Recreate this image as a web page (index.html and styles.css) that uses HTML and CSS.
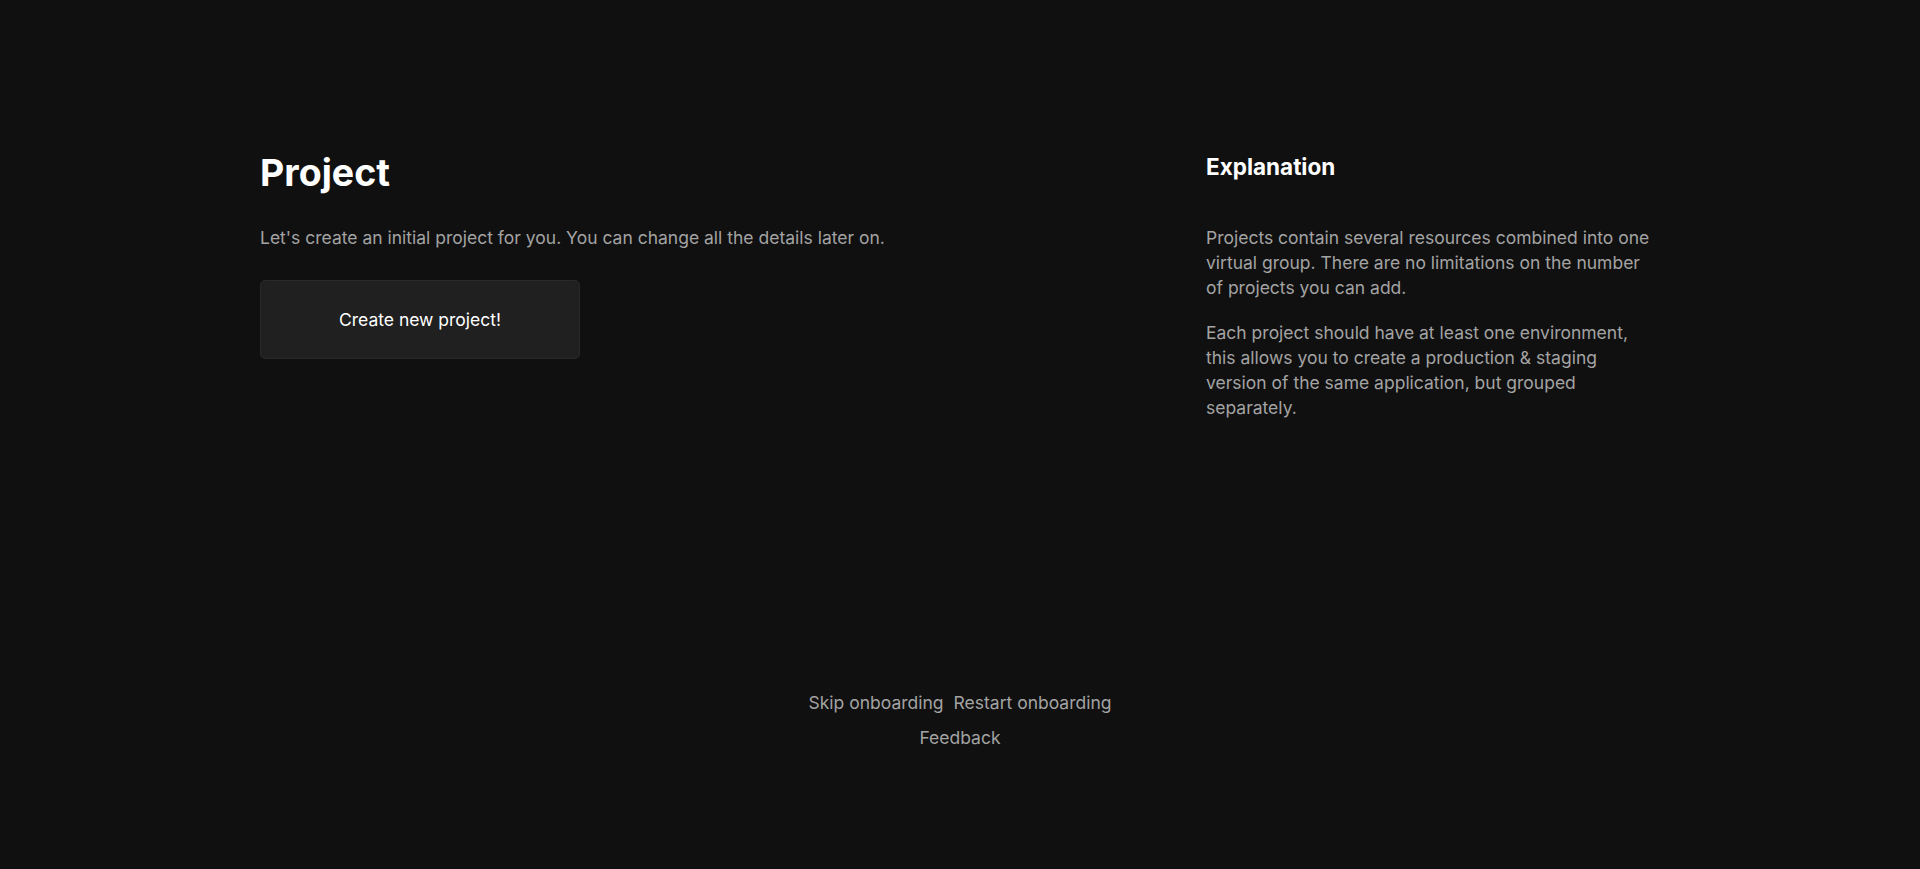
FILE: index.html
```html
<!DOCTYPE html>
<html lang="en">
<head>
<meta charset="utf-8">
<title>Onboarding - Project</title>
<link rel="stylesheet" href="styles.css">
</head>
<body>
<div class="page">
  <main class="step">
    <section class="step-main">
      <h1 class="step-title">Project</h1>
      <p class="step-question">Let's create an initial project for you. You can change all the details later on.</p>
      <div class="step-actions">
        <button class="box-button" type="button">Create new project!</button>
      </div>
    </section>
    <aside class="step-explanation">
      <h3 class="explanation-title">Explanation</h3>
      <div class="explanation-body">
        <p>Projects contain several resources combined into one virtual group. There are no limitations on the number of projects you can add.</p>
        <p>Each project should have at least one environment, this allows you to create a production &amp; staging version of the same application, but grouped separately.</p>
      </div>
    </aside>
  </main>
  <footer class="footer">
    <div class="footer-row">
      <a class="footer-link" href="#">Skip onboarding</a>
      <a class="footer-link" href="#">Restart onboarding</a>
    </div>
    <div class="footer-row">
      <a class="footer-link" href="#">Feedback</a>
    </div>
  </footer>
</div>
</body>
</html>
```
FILE: styles.css
```css
* {
  box-sizing: border-box;
}

html, body {
  margin: 0;
  padding: 0;
  background: #101010;
}

body {
  font-family: Inter, "Noto Sans", "Liberation Sans", sans-serif;
  color: #a3a3a3;
  font-size: 17.5px;
  line-height: 25px;
}

.page {
  min-height: 869px;
  display: flex;
  flex-direction: column;
}

.step {
  display: grid;
  grid-template-columns: 946px 448px;
  padding-left: 260px;
  padding-top: 150px;
}

.step-main {
  display: flex;
  flex-direction: column;
}

.step-title {
  margin: 0;
  font-size: 37.5px;
  line-height: 45px;
  font-weight: 700;
  color: #ffffff;
}

.step-question {
  margin: 30px 0 0;
}

.step-actions {
  margin-top: 30px;
  display: flex;
}

.box-button {
  width: 320px;
  height: 79px;
  background: #202020;
  border: 1px solid #292929;
  border-radius: 5px;
  color: #ffffff;
  font-family: inherit;
  font-size: 17.5px;
  font-weight: 400;
  display: flex;
  align-items: center;
  justify-content: center;
  cursor: pointer;
}

.step-explanation {
  padding-top: 3px;
}

.explanation-title {
  margin: 0;
  font-size: 22.5px;
  line-height: 28px;
  font-weight: 700;
  color: #ffffff;
}

.explanation-body {
  margin-top: 44px;
}

.explanation-body p {
  margin: 0 0 20px;
}

.footer {
  margin-top: 250px;
  display: flex;
  flex-direction: column;
  align-items: center;
  gap: 10px;
}

.footer-row {
  display: flex;
  gap: 10px;
}

.footer-link {
  color: #a3a3a3;
  text-decoration: none;
}
```
